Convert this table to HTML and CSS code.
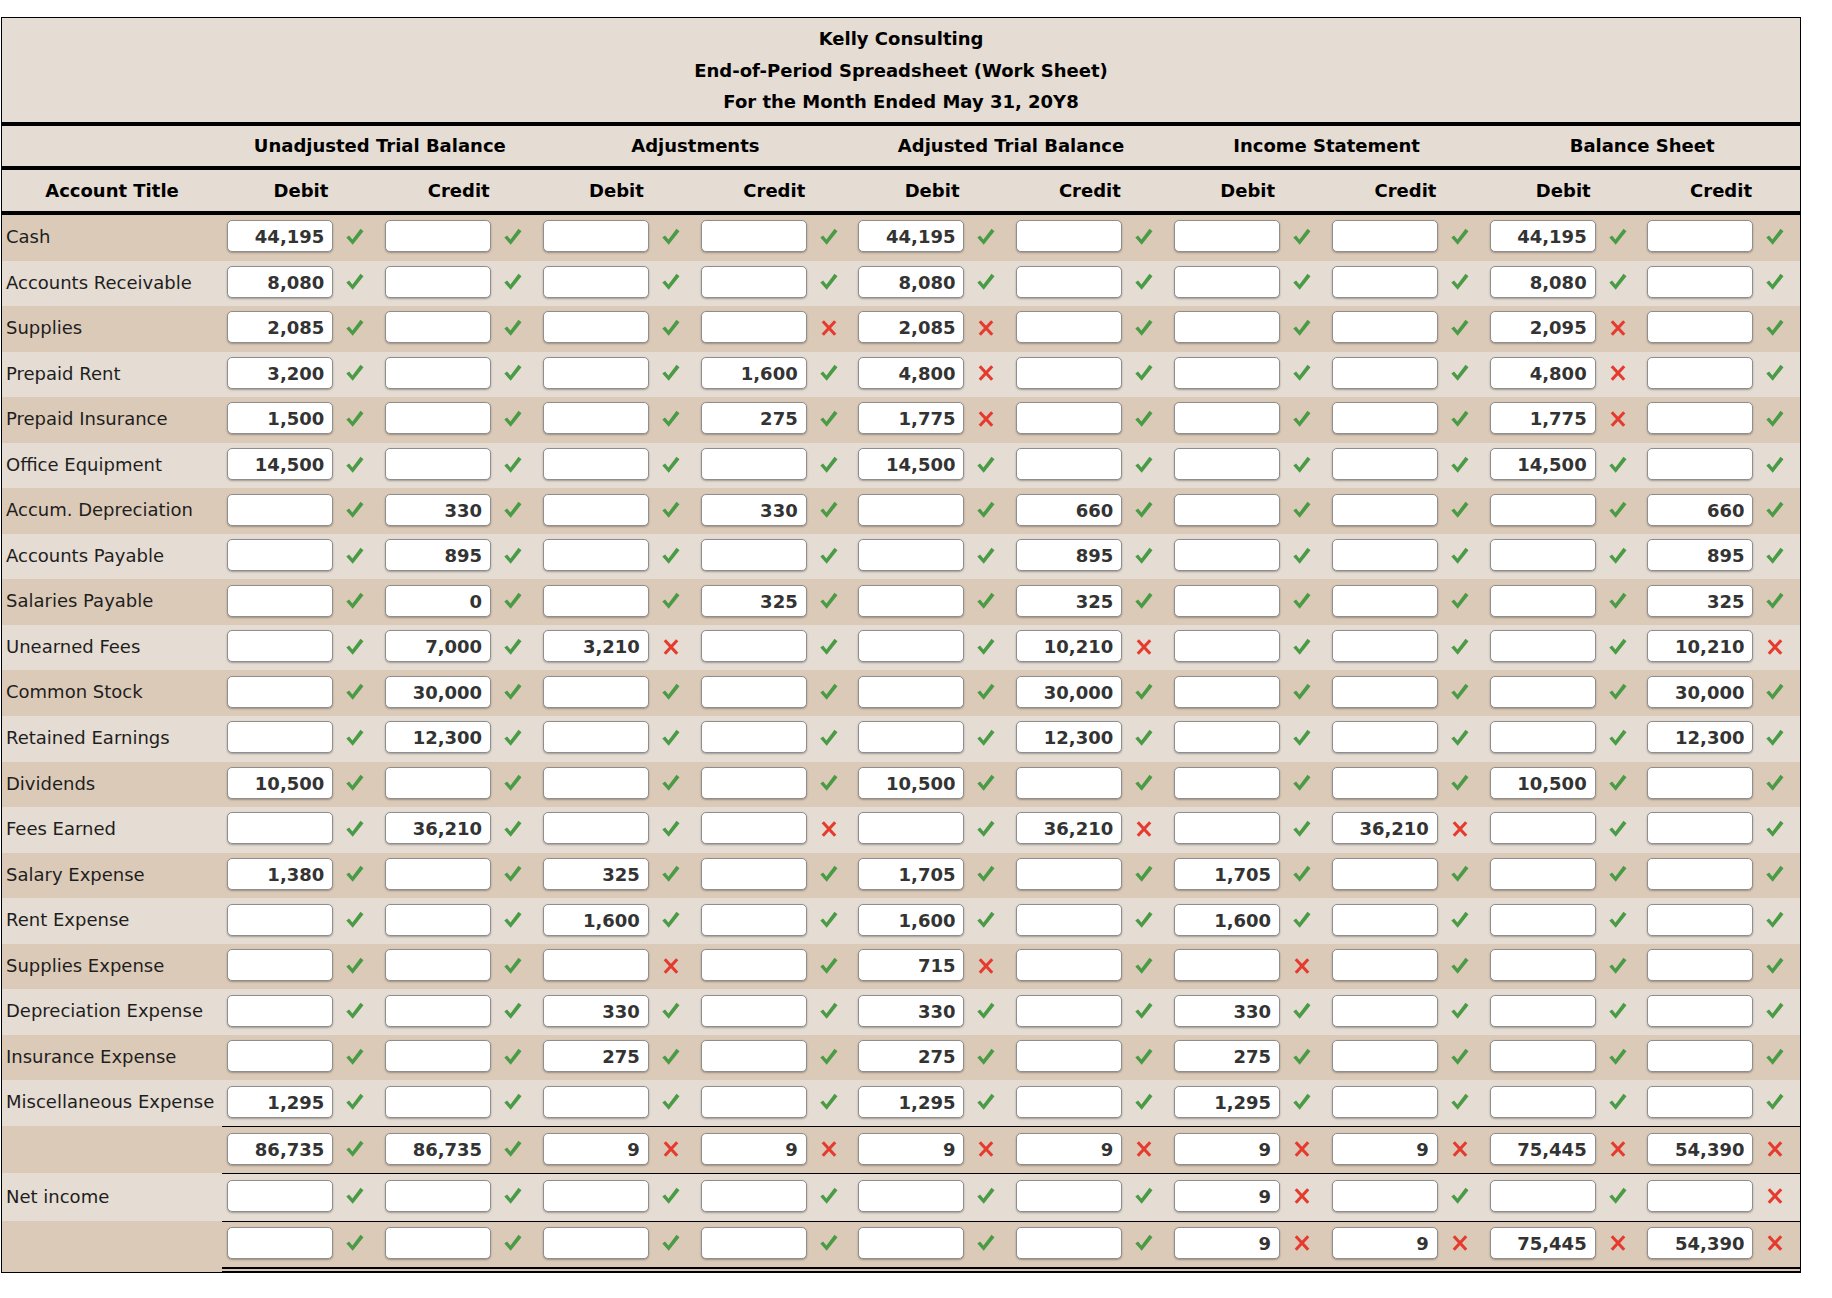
FILE: index.html
```html
<!DOCTYPE html>
<html lang="en">
<head>
<meta charset="utf-8">
<title>Kelly Consulting – End-of-Period Spreadsheet</title>
<link rel="stylesheet" href="styles.css">
</head>
<body>
<svg class="defs" width="0" height="0" aria-hidden="true">
  <symbol id="ok" viewBox="0 0 20 20"><polygon points="1.3,10.6 4.1,8.4 7.4,12.4 15.5,1.8 18.5,4.2 7.7,17.8" fill="#4a9b45"/></symbol>
  <symbol id="no" viewBox="0 0 20 20"><path d="M3.8 3.2 L16.2 16.8 M16.2 3.2 L3.8 16.8" stroke="#e53b2f" stroke-width="3.1" fill="none"/></symbol>
</svg>
<div class="sheet">
  <div class="title">
    <div>Kelly Consulting</div>
    <div>End-of-Period Spreadsheet (Work Sheet)</div>
    <div>For the Month Ended May 31, 20Y8</div>
  </div>
  <div class="grid groups">
    <div></div>
    <div class="g">Unadjusted Trial Balance</div>
    <div class="g">Adjustments</div>
    <div class="g">Adjusted Trial Balance</div>
    <div class="g">Income Statement</div>
    <div class="g">Balance Sheet</div>
  </div>
  <div class="grid heads">
    <div>Account Title</div>
    <div>Debit</div><div>Credit</div><div>Debit</div><div>Credit</div><div>Debit</div><div>Credit</div><div>Debit</div><div>Credit</div><div>Debit</div><div>Credit</div>
  </div>

  <div class="grid row dark">
    <div class="acct">Cash</div>
    <div class="cell"><input class="amt" value="44,195" readonly><svg class="mark"><use href="#ok"/></svg></div>
    <div class="cell"><input class="amt" value="" readonly><svg class="mark"><use href="#ok"/></svg></div>
    <div class="cell"><input class="amt" value="" readonly><svg class="mark"><use href="#ok"/></svg></div>
    <div class="cell"><input class="amt" value="" readonly><svg class="mark"><use href="#ok"/></svg></div>
    <div class="cell"><input class="amt" value="44,195" readonly><svg class="mark"><use href="#ok"/></svg></div>
    <div class="cell"><input class="amt" value="" readonly><svg class="mark"><use href="#ok"/></svg></div>
    <div class="cell"><input class="amt" value="" readonly><svg class="mark"><use href="#ok"/></svg></div>
    <div class="cell"><input class="amt" value="" readonly><svg class="mark"><use href="#ok"/></svg></div>
    <div class="cell"><input class="amt" value="44,195" readonly><svg class="mark"><use href="#ok"/></svg></div>
    <div class="cell"><input class="amt" value="" readonly><svg class="mark"><use href="#ok"/></svg></div>
  </div>

  <div class="grid row">
    <div class="acct">Accounts Receivable</div>
    <div class="cell"><input class="amt" value="8,080" readonly><svg class="mark"><use href="#ok"/></svg></div>
    <div class="cell"><input class="amt" value="" readonly><svg class="mark"><use href="#ok"/></svg></div>
    <div class="cell"><input class="amt" value="" readonly><svg class="mark"><use href="#ok"/></svg></div>
    <div class="cell"><input class="amt" value="" readonly><svg class="mark"><use href="#ok"/></svg></div>
    <div class="cell"><input class="amt" value="8,080" readonly><svg class="mark"><use href="#ok"/></svg></div>
    <div class="cell"><input class="amt" value="" readonly><svg class="mark"><use href="#ok"/></svg></div>
    <div class="cell"><input class="amt" value="" readonly><svg class="mark"><use href="#ok"/></svg></div>
    <div class="cell"><input class="amt" value="" readonly><svg class="mark"><use href="#ok"/></svg></div>
    <div class="cell"><input class="amt" value="8,080" readonly><svg class="mark"><use href="#ok"/></svg></div>
    <div class="cell"><input class="amt" value="" readonly><svg class="mark"><use href="#ok"/></svg></div>
  </div>

  <div class="grid row dark">
    <div class="acct">Supplies</div>
    <div class="cell"><input class="amt" value="2,085" readonly><svg class="mark"><use href="#ok"/></svg></div>
    <div class="cell"><input class="amt" value="" readonly><svg class="mark"><use href="#ok"/></svg></div>
    <div class="cell"><input class="amt" value="" readonly><svg class="mark"><use href="#ok"/></svg></div>
    <div class="cell"><input class="amt" value="" readonly><svg class="mark"><use href="#no"/></svg></div>
    <div class="cell"><input class="amt" value="2,085" readonly><svg class="mark"><use href="#no"/></svg></div>
    <div class="cell"><input class="amt" value="" readonly><svg class="mark"><use href="#ok"/></svg></div>
    <div class="cell"><input class="amt" value="" readonly><svg class="mark"><use href="#ok"/></svg></div>
    <div class="cell"><input class="amt" value="" readonly><svg class="mark"><use href="#ok"/></svg></div>
    <div class="cell"><input class="amt" value="2,095" readonly><svg class="mark"><use href="#no"/></svg></div>
    <div class="cell"><input class="amt" value="" readonly><svg class="mark"><use href="#ok"/></svg></div>
  </div>

  <div class="grid row">
    <div class="acct">Prepaid Rent</div>
    <div class="cell"><input class="amt" value="3,200" readonly><svg class="mark"><use href="#ok"/></svg></div>
    <div class="cell"><input class="amt" value="" readonly><svg class="mark"><use href="#ok"/></svg></div>
    <div class="cell"><input class="amt" value="" readonly><svg class="mark"><use href="#ok"/></svg></div>
    <div class="cell"><input class="amt" value="1,600" readonly><svg class="mark"><use href="#ok"/></svg></div>
    <div class="cell"><input class="amt" value="4,800" readonly><svg class="mark"><use href="#no"/></svg></div>
    <div class="cell"><input class="amt" value="" readonly><svg class="mark"><use href="#ok"/></svg></div>
    <div class="cell"><input class="amt" value="" readonly><svg class="mark"><use href="#ok"/></svg></div>
    <div class="cell"><input class="amt" value="" readonly><svg class="mark"><use href="#ok"/></svg></div>
    <div class="cell"><input class="amt" value="4,800" readonly><svg class="mark"><use href="#no"/></svg></div>
    <div class="cell"><input class="amt" value="" readonly><svg class="mark"><use href="#ok"/></svg></div>
  </div>

  <div class="grid row dark">
    <div class="acct">Prepaid Insurance</div>
    <div class="cell"><input class="amt" value="1,500" readonly><svg class="mark"><use href="#ok"/></svg></div>
    <div class="cell"><input class="amt" value="" readonly><svg class="mark"><use href="#ok"/></svg></div>
    <div class="cell"><input class="amt" value="" readonly><svg class="mark"><use href="#ok"/></svg></div>
    <div class="cell"><input class="amt" value="275" readonly><svg class="mark"><use href="#ok"/></svg></div>
    <div class="cell"><input class="amt" value="1,775" readonly><svg class="mark"><use href="#no"/></svg></div>
    <div class="cell"><input class="amt" value="" readonly><svg class="mark"><use href="#ok"/></svg></div>
    <div class="cell"><input class="amt" value="" readonly><svg class="mark"><use href="#ok"/></svg></div>
    <div class="cell"><input class="amt" value="" readonly><svg class="mark"><use href="#ok"/></svg></div>
    <div class="cell"><input class="amt" value="1,775" readonly><svg class="mark"><use href="#no"/></svg></div>
    <div class="cell"><input class="amt" value="" readonly><svg class="mark"><use href="#ok"/></svg></div>
  </div>

  <div class="grid row">
    <div class="acct">Office Equipment</div>
    <div class="cell"><input class="amt" value="14,500" readonly><svg class="mark"><use href="#ok"/></svg></div>
    <div class="cell"><input class="amt" value="" readonly><svg class="mark"><use href="#ok"/></svg></div>
    <div class="cell"><input class="amt" value="" readonly><svg class="mark"><use href="#ok"/></svg></div>
    <div class="cell"><input class="amt" value="" readonly><svg class="mark"><use href="#ok"/></svg></div>
    <div class="cell"><input class="amt" value="14,500" readonly><svg class="mark"><use href="#ok"/></svg></div>
    <div class="cell"><input class="amt" value="" readonly><svg class="mark"><use href="#ok"/></svg></div>
    <div class="cell"><input class="amt" value="" readonly><svg class="mark"><use href="#ok"/></svg></div>
    <div class="cell"><input class="amt" value="" readonly><svg class="mark"><use href="#ok"/></svg></div>
    <div class="cell"><input class="amt" value="14,500" readonly><svg class="mark"><use href="#ok"/></svg></div>
    <div class="cell"><input class="amt" value="" readonly><svg class="mark"><use href="#ok"/></svg></div>
  </div>

  <div class="grid row dark">
    <div class="acct">Accum. Depreciation</div>
    <div class="cell"><input class="amt" value="" readonly><svg class="mark"><use href="#ok"/></svg></div>
    <div class="cell"><input class="amt" value="330" readonly><svg class="mark"><use href="#ok"/></svg></div>
    <div class="cell"><input class="amt" value="" readonly><svg class="mark"><use href="#ok"/></svg></div>
    <div class="cell"><input class="amt" value="330" readonly><svg class="mark"><use href="#ok"/></svg></div>
    <div class="cell"><input class="amt" value="" readonly><svg class="mark"><use href="#ok"/></svg></div>
    <div class="cell"><input class="amt" value="660" readonly><svg class="mark"><use href="#ok"/></svg></div>
    <div class="cell"><input class="amt" value="" readonly><svg class="mark"><use href="#ok"/></svg></div>
    <div class="cell"><input class="amt" value="" readonly><svg class="mark"><use href="#ok"/></svg></div>
    <div class="cell"><input class="amt" value="" readonly><svg class="mark"><use href="#ok"/></svg></div>
    <div class="cell"><input class="amt" value="660" readonly><svg class="mark"><use href="#ok"/></svg></div>
  </div>

  <div class="grid row">
    <div class="acct">Accounts Payable</div>
    <div class="cell"><input class="amt" value="" readonly><svg class="mark"><use href="#ok"/></svg></div>
    <div class="cell"><input class="amt" value="895" readonly><svg class="mark"><use href="#ok"/></svg></div>
    <div class="cell"><input class="amt" value="" readonly><svg class="mark"><use href="#ok"/></svg></div>
    <div class="cell"><input class="amt" value="" readonly><svg class="mark"><use href="#ok"/></svg></div>
    <div class="cell"><input class="amt" value="" readonly><svg class="mark"><use href="#ok"/></svg></div>
    <div class="cell"><input class="amt" value="895" readonly><svg class="mark"><use href="#ok"/></svg></div>
    <div class="cell"><input class="amt" value="" readonly><svg class="mark"><use href="#ok"/></svg></div>
    <div class="cell"><input class="amt" value="" readonly><svg class="mark"><use href="#ok"/></svg></div>
    <div class="cell"><input class="amt" value="" readonly><svg class="mark"><use href="#ok"/></svg></div>
    <div class="cell"><input class="amt" value="895" readonly><svg class="mark"><use href="#ok"/></svg></div>
  </div>

  <div class="grid row dark">
    <div class="acct">Salaries Payable</div>
    <div class="cell"><input class="amt" value="" readonly><svg class="mark"><use href="#ok"/></svg></div>
    <div class="cell"><input class="amt" value="0" readonly><svg class="mark"><use href="#ok"/></svg></div>
    <div class="cell"><input class="amt" value="" readonly><svg class="mark"><use href="#ok"/></svg></div>
    <div class="cell"><input class="amt" value="325" readonly><svg class="mark"><use href="#ok"/></svg></div>
    <div class="cell"><input class="amt" value="" readonly><svg class="mark"><use href="#ok"/></svg></div>
    <div class="cell"><input class="amt" value="325" readonly><svg class="mark"><use href="#ok"/></svg></div>
    <div class="cell"><input class="amt" value="" readonly><svg class="mark"><use href="#ok"/></svg></div>
    <div class="cell"><input class="amt" value="" readonly><svg class="mark"><use href="#ok"/></svg></div>
    <div class="cell"><input class="amt" value="" readonly><svg class="mark"><use href="#ok"/></svg></div>
    <div class="cell"><input class="amt" value="325" readonly><svg class="mark"><use href="#ok"/></svg></div>
  </div>

  <div class="grid row">
    <div class="acct">Unearned Fees</div>
    <div class="cell"><input class="amt" value="" readonly><svg class="mark"><use href="#ok"/></svg></div>
    <div class="cell"><input class="amt" value="7,000" readonly><svg class="mark"><use href="#ok"/></svg></div>
    <div class="cell"><input class="amt" value="3,210" readonly><svg class="mark"><use href="#no"/></svg></div>
    <div class="cell"><input class="amt" value="" readonly><svg class="mark"><use href="#ok"/></svg></div>
    <div class="cell"><input class="amt" value="" readonly><svg class="mark"><use href="#ok"/></svg></div>
    <div class="cell"><input class="amt" value="10,210" readonly><svg class="mark"><use href="#no"/></svg></div>
    <div class="cell"><input class="amt" value="" readonly><svg class="mark"><use href="#ok"/></svg></div>
    <div class="cell"><input class="amt" value="" readonly><svg class="mark"><use href="#ok"/></svg></div>
    <div class="cell"><input class="amt" value="" readonly><svg class="mark"><use href="#ok"/></svg></div>
    <div class="cell"><input class="amt" value="10,210" readonly><svg class="mark"><use href="#no"/></svg></div>
  </div>

  <div class="grid row dark">
    <div class="acct">Common Stock</div>
    <div class="cell"><input class="amt" value="" readonly><svg class="mark"><use href="#ok"/></svg></div>
    <div class="cell"><input class="amt" value="30,000" readonly><svg class="mark"><use href="#ok"/></svg></div>
    <div class="cell"><input class="amt" value="" readonly><svg class="mark"><use href="#ok"/></svg></div>
    <div class="cell"><input class="amt" value="" readonly><svg class="mark"><use href="#ok"/></svg></div>
    <div class="cell"><input class="amt" value="" readonly><svg class="mark"><use href="#ok"/></svg></div>
    <div class="cell"><input class="amt" value="30,000" readonly><svg class="mark"><use href="#ok"/></svg></div>
    <div class="cell"><input class="amt" value="" readonly><svg class="mark"><use href="#ok"/></svg></div>
    <div class="cell"><input class="amt" value="" readonly><svg class="mark"><use href="#ok"/></svg></div>
    <div class="cell"><input class="amt" value="" readonly><svg class="mark"><use href="#ok"/></svg></div>
    <div class="cell"><input class="amt" value="30,000" readonly><svg class="mark"><use href="#ok"/></svg></div>
  </div>

  <div class="grid row">
    <div class="acct">Retained Earnings</div>
    <div class="cell"><input class="amt" value="" readonly><svg class="mark"><use href="#ok"/></svg></div>
    <div class="cell"><input class="amt" value="12,300" readonly><svg class="mark"><use href="#ok"/></svg></div>
    <div class="cell"><input class="amt" value="" readonly><svg class="mark"><use href="#ok"/></svg></div>
    <div class="cell"><input class="amt" value="" readonly><svg class="mark"><use href="#ok"/></svg></div>
    <div class="cell"><input class="amt" value="" readonly><svg class="mark"><use href="#ok"/></svg></div>
    <div class="cell"><input class="amt" value="12,300" readonly><svg class="mark"><use href="#ok"/></svg></div>
    <div class="cell"><input class="amt" value="" readonly><svg class="mark"><use href="#ok"/></svg></div>
    <div class="cell"><input class="amt" value="" readonly><svg class="mark"><use href="#ok"/></svg></div>
    <div class="cell"><input class="amt" value="" readonly><svg class="mark"><use href="#ok"/></svg></div>
    <div class="cell"><input class="amt" value="12,300" readonly><svg class="mark"><use href="#ok"/></svg></div>
  </div>

  <div class="grid row dark">
    <div class="acct">Dividends</div>
    <div class="cell"><input class="amt" value="10,500" readonly><svg class="mark"><use href="#ok"/></svg></div>
    <div class="cell"><input class="amt" value="" readonly><svg class="mark"><use href="#ok"/></svg></div>
    <div class="cell"><input class="amt" value="" readonly><svg class="mark"><use href="#ok"/></svg></div>
    <div class="cell"><input class="amt" value="" readonly><svg class="mark"><use href="#ok"/></svg></div>
    <div class="cell"><input class="amt" value="10,500" readonly><svg class="mark"><use href="#ok"/></svg></div>
    <div class="cell"><input class="amt" value="" readonly><svg class="mark"><use href="#ok"/></svg></div>
    <div class="cell"><input class="amt" value="" readonly><svg class="mark"><use href="#ok"/></svg></div>
    <div class="cell"><input class="amt" value="" readonly><svg class="mark"><use href="#ok"/></svg></div>
    <div class="cell"><input class="amt" value="10,500" readonly><svg class="mark"><use href="#ok"/></svg></div>
    <div class="cell"><input class="amt" value="" readonly><svg class="mark"><use href="#ok"/></svg></div>
  </div>

  <div class="grid row">
    <div class="acct">Fees Earned</div>
    <div class="cell"><input class="amt" value="" readonly><svg class="mark"><use href="#ok"/></svg></div>
    <div class="cell"><input class="amt" value="36,210" readonly><svg class="mark"><use href="#ok"/></svg></div>
    <div class="cell"><input class="amt" value="" readonly><svg class="mark"><use href="#ok"/></svg></div>
    <div class="cell"><input class="amt" value="" readonly><svg class="mark"><use href="#no"/></svg></div>
    <div class="cell"><input class="amt" value="" readonly><svg class="mark"><use href="#ok"/></svg></div>
    <div class="cell"><input class="amt" value="36,210" readonly><svg class="mark"><use href="#no"/></svg></div>
    <div class="cell"><input class="amt" value="" readonly><svg class="mark"><use href="#ok"/></svg></div>
    <div class="cell"><input class="amt" value="36,210" readonly><svg class="mark"><use href="#no"/></svg></div>
    <div class="cell"><input class="amt" value="" readonly><svg class="mark"><use href="#ok"/></svg></div>
    <div class="cell"><input class="amt" value="" readonly><svg class="mark"><use href="#ok"/></svg></div>
  </div>

  <div class="grid row dark">
    <div class="acct">Salary Expense</div>
    <div class="cell"><input class="amt" value="1,380" readonly><svg class="mark"><use href="#ok"/></svg></div>
    <div class="cell"><input class="amt" value="" readonly><svg class="mark"><use href="#ok"/></svg></div>
    <div class="cell"><input class="amt" value="325" readonly><svg class="mark"><use href="#ok"/></svg></div>
    <div class="cell"><input class="amt" value="" readonly><svg class="mark"><use href="#ok"/></svg></div>
    <div class="cell"><input class="amt" value="1,705" readonly><svg class="mark"><use href="#ok"/></svg></div>
    <div class="cell"><input class="amt" value="" readonly><svg class="mark"><use href="#ok"/></svg></div>
    <div class="cell"><input class="amt" value="1,705" readonly><svg class="mark"><use href="#ok"/></svg></div>
    <div class="cell"><input class="amt" value="" readonly><svg class="mark"><use href="#ok"/></svg></div>
    <div class="cell"><input class="amt" value="" readonly><svg class="mark"><use href="#ok"/></svg></div>
    <div class="cell"><input class="amt" value="" readonly><svg class="mark"><use href="#ok"/></svg></div>
  </div>

  <div class="grid row">
    <div class="acct">Rent Expense</div>
    <div class="cell"><input class="amt" value="" readonly><svg class="mark"><use href="#ok"/></svg></div>
    <div class="cell"><input class="amt" value="" readonly><svg class="mark"><use href="#ok"/></svg></div>
    <div class="cell"><input class="amt" value="1,600" readonly><svg class="mark"><use href="#ok"/></svg></div>
    <div class="cell"><input class="amt" value="" readonly><svg class="mark"><use href="#ok"/></svg></div>
    <div class="cell"><input class="amt" value="1,600" readonly><svg class="mark"><use href="#ok"/></svg></div>
    <div class="cell"><input class="amt" value="" readonly><svg class="mark"><use href="#ok"/></svg></div>
    <div class="cell"><input class="amt" value="1,600" readonly><svg class="mark"><use href="#ok"/></svg></div>
    <div class="cell"><input class="amt" value="" readonly><svg class="mark"><use href="#ok"/></svg></div>
    <div class="cell"><input class="amt" value="" readonly><svg class="mark"><use href="#ok"/></svg></div>
    <div class="cell"><input class="amt" value="" readonly><svg class="mark"><use href="#ok"/></svg></div>
  </div>

  <div class="grid row dark">
    <div class="acct">Supplies Expense</div>
    <div class="cell"><input class="amt" value="" readonly><svg class="mark"><use href="#ok"/></svg></div>
    <div class="cell"><input class="amt" value="" readonly><svg class="mark"><use href="#ok"/></svg></div>
    <div class="cell"><input class="amt" value="" readonly><svg class="mark"><use href="#no"/></svg></div>
    <div class="cell"><input class="amt" value="" readonly><svg class="mark"><use href="#ok"/></svg></div>
    <div class="cell"><input class="amt" value="715" readonly><svg class="mark"><use href="#no"/></svg></div>
    <div class="cell"><input class="amt" value="" readonly><svg class="mark"><use href="#ok"/></svg></div>
    <div class="cell"><input class="amt" value="" readonly><svg class="mark"><use href="#no"/></svg></div>
    <div class="cell"><input class="amt" value="" readonly><svg class="mark"><use href="#ok"/></svg></div>
    <div class="cell"><input class="amt" value="" readonly><svg class="mark"><use href="#ok"/></svg></div>
    <div class="cell"><input class="amt" value="" readonly><svg class="mark"><use href="#ok"/></svg></div>
  </div>

  <div class="grid row">
    <div class="acct">Depreciation Expense</div>
    <div class="cell"><input class="amt" value="" readonly><svg class="mark"><use href="#ok"/></svg></div>
    <div class="cell"><input class="amt" value="" readonly><svg class="mark"><use href="#ok"/></svg></div>
    <div class="cell"><input class="amt" value="330" readonly><svg class="mark"><use href="#ok"/></svg></div>
    <div class="cell"><input class="amt" value="" readonly><svg class="mark"><use href="#ok"/></svg></div>
    <div class="cell"><input class="amt" value="330" readonly><svg class="mark"><use href="#ok"/></svg></div>
    <div class="cell"><input class="amt" value="" readonly><svg class="mark"><use href="#ok"/></svg></div>
    <div class="cell"><input class="amt" value="330" readonly><svg class="mark"><use href="#ok"/></svg></div>
    <div class="cell"><input class="amt" value="" readonly><svg class="mark"><use href="#ok"/></svg></div>
    <div class="cell"><input class="amt" value="" readonly><svg class="mark"><use href="#ok"/></svg></div>
    <div class="cell"><input class="amt" value="" readonly><svg class="mark"><use href="#ok"/></svg></div>
  </div>

  <div class="grid row dark">
    <div class="acct">Insurance Expense</div>
    <div class="cell"><input class="amt" value="" readonly><svg class="mark"><use href="#ok"/></svg></div>
    <div class="cell"><input class="amt" value="" readonly><svg class="mark"><use href="#ok"/></svg></div>
    <div class="cell"><input class="amt" value="275" readonly><svg class="mark"><use href="#ok"/></svg></div>
    <div class="cell"><input class="amt" value="" readonly><svg class="mark"><use href="#ok"/></svg></div>
    <div class="cell"><input class="amt" value="275" readonly><svg class="mark"><use href="#ok"/></svg></div>
    <div class="cell"><input class="amt" value="" readonly><svg class="mark"><use href="#ok"/></svg></div>
    <div class="cell"><input class="amt" value="275" readonly><svg class="mark"><use href="#ok"/></svg></div>
    <div class="cell"><input class="amt" value="" readonly><svg class="mark"><use href="#ok"/></svg></div>
    <div class="cell"><input class="amt" value="" readonly><svg class="mark"><use href="#ok"/></svg></div>
    <div class="cell"><input class="amt" value="" readonly><svg class="mark"><use href="#ok"/></svg></div>
  </div>

  <div class="grid row">
    <div class="acct">Miscellaneous Expense</div>
    <div class="cell"><input class="amt" value="1,295" readonly><svg class="mark"><use href="#ok"/></svg></div>
    <div class="cell"><input class="amt" value="" readonly><svg class="mark"><use href="#ok"/></svg></div>
    <div class="cell"><input class="amt" value="" readonly><svg class="mark"><use href="#ok"/></svg></div>
    <div class="cell"><input class="amt" value="" readonly><svg class="mark"><use href="#ok"/></svg></div>
    <div class="cell"><input class="amt" value="1,295" readonly><svg class="mark"><use href="#ok"/></svg></div>
    <div class="cell"><input class="amt" value="" readonly><svg class="mark"><use href="#ok"/></svg></div>
    <div class="cell"><input class="amt" value="1,295" readonly><svg class="mark"><use href="#ok"/></svg></div>
    <div class="cell"><input class="amt" value="" readonly><svg class="mark"><use href="#ok"/></svg></div>
    <div class="cell"><input class="amt" value="" readonly><svg class="mark"><use href="#ok"/></svg></div>
    <div class="cell"><input class="amt" value="" readonly><svg class="mark"><use href="#ok"/></svg></div>
  </div>

  <div class="grid row dark total">
    <div class="acct"></div>
    <div class="cell"><input class="amt" value="86,735" readonly><svg class="mark"><use href="#ok"/></svg></div>
    <div class="cell"><input class="amt" value="86,735" readonly><svg class="mark"><use href="#ok"/></svg></div>
    <div class="cell"><input class="amt" value="9" readonly><svg class="mark"><use href="#no"/></svg></div>
    <div class="cell"><input class="amt" value="9" readonly><svg class="mark"><use href="#no"/></svg></div>
    <div class="cell"><input class="amt" value="9" readonly><svg class="mark"><use href="#no"/></svg></div>
    <div class="cell"><input class="amt" value="9" readonly><svg class="mark"><use href="#no"/></svg></div>
    <div class="cell"><input class="amt" value="9" readonly><svg class="mark"><use href="#no"/></svg></div>
    <div class="cell"><input class="amt" value="9" readonly><svg class="mark"><use href="#no"/></svg></div>
    <div class="cell"><input class="amt" value="75,445" readonly><svg class="mark"><use href="#no"/></svg></div>
    <div class="cell"><input class="amt" value="54,390" readonly><svg class="mark"><use href="#no"/></svg></div>
  </div>

  <div class="grid row total">
    <div class="acct">Net income</div>
    <div class="cell"><input class="amt" value="" readonly><svg class="mark"><use href="#ok"/></svg></div>
    <div class="cell"><input class="amt" value="" readonly><svg class="mark"><use href="#ok"/></svg></div>
    <div class="cell"><input class="amt" value="" readonly><svg class="mark"><use href="#ok"/></svg></div>
    <div class="cell"><input class="amt" value="" readonly><svg class="mark"><use href="#ok"/></svg></div>
    <div class="cell"><input class="amt" value="" readonly><svg class="mark"><use href="#ok"/></svg></div>
    <div class="cell"><input class="amt" value="" readonly><svg class="mark"><use href="#ok"/></svg></div>
    <div class="cell"><input class="amt" value="9" readonly><svg class="mark"><use href="#no"/></svg></div>
    <div class="cell"><input class="amt" value="" readonly><svg class="mark"><use href="#ok"/></svg></div>
    <div class="cell"><input class="amt" value="" readonly><svg class="mark"><use href="#ok"/></svg></div>
    <div class="cell"><input class="amt" value="" readonly><svg class="mark"><use href="#no"/></svg></div>
  </div>

  <div class="grid row dark total last">
    <div class="acct"></div>
    <div class="cell"><input class="amt" value="" readonly><svg class="mark"><use href="#ok"/></svg></div>
    <div class="cell"><input class="amt" value="" readonly><svg class="mark"><use href="#ok"/></svg></div>
    <div class="cell"><input class="amt" value="" readonly><svg class="mark"><use href="#ok"/></svg></div>
    <div class="cell"><input class="amt" value="" readonly><svg class="mark"><use href="#ok"/></svg></div>
    <div class="cell"><input class="amt" value="" readonly><svg class="mark"><use href="#ok"/></svg></div>
    <div class="cell"><input class="amt" value="" readonly><svg class="mark"><use href="#ok"/></svg></div>
    <div class="cell"><input class="amt" value="9" readonly><svg class="mark"><use href="#no"/></svg></div>
    <div class="cell"><input class="amt" value="9" readonly><svg class="mark"><use href="#no"/></svg></div>
    <div class="cell"><input class="amt" value="75,445" readonly><svg class="mark"><use href="#no"/></svg></div>
    <div class="cell"><input class="amt" value="54,390" readonly><svg class="mark"><use href="#no"/></svg></div>
  </div>
</div>
</body>
</html>
```

FILE: styles.css
```css
body {
  margin: 0;
  padding: 17px 0 0 1px;
  background: #fff;
  font-family: "DejaVu Sans", Verdana, sans-serif;
  font-size: 18px;
  color: #1e1e1e;
}

.defs {
  position: absolute;
  width: 0;
  height: 0;
  overflow: hidden;
}

.sheet {
  width: 1798px;
  border: 1px solid #000;
  border-bottom: 0;
  background: #e5dcd3;
}

.title {
  padding: 5px 0 4.5px;
  line-height: 31.5px;
  text-align: center;
  font-weight: bold;
  color: #000;
  border-bottom: 4px solid #000;
}

.grid {
  display: grid;
  grid-template-columns: 220px repeat(10, 157.8px);
}

.groups {
  height: 38.5px;
  padding-bottom: 1.5px;
  align-items: center;
  text-align: center;
  font-weight: bold;
  color: #000;
  border-bottom: 4px solid #000;
}

.groups .g {
  grid-column: span 2;
}

.heads {
  height: 40px;
  padding-bottom: 1px;
  align-items: center;
  text-align: center;
  font-weight: bold;
  color: #000;
  border-bottom: 4px solid #000;
}

.row {
  height: 45.55px;
  background: #e5dcd3;
}

.row.dark {
  background: #dccab8;
}

.acct {
  padding: 6px 0 0 4px;
  line-height: 32px;
  white-space: nowrap;
}

.cell {
  display: flex;
  align-items: flex-start;
  padding: 5.3px 0 0 5.3px;
}

.amt {
  box-sizing: border-box;
  width: 106px;
  height: 32px;
  margin: 0;
  padding: 1px 8px 0 4px;
  border: 1px solid #8e8e8e;
  border-radius: 5px;
  background: #fff;
  box-shadow: 0 1px 2px rgba(0, 0, 0, 0.3);
  font: bold 18px "DejaVu Sans", Verdana, sans-serif;
  color: #333;
  text-align: right;
  outline: none;
}

.mark {
  flex: none;
  width: 20px;
  height: 20px;
  margin: 6.5px 0 0 12px;
}

.row.total {
  height: auto;
}

.row.total .cell {
  border-top: 1px solid #000;
  padding-top: 5.7px;
  padding-bottom: 8.6px;
}

.row.total .acct {
  padding-top: 7.5px;
}

.row.last .cell {
  padding-top: 5px;
  padding-bottom: 8px;
  border-bottom: 6px double #000;
}

.row.last .acct {
  border-bottom: 1px solid #000;
}
```
